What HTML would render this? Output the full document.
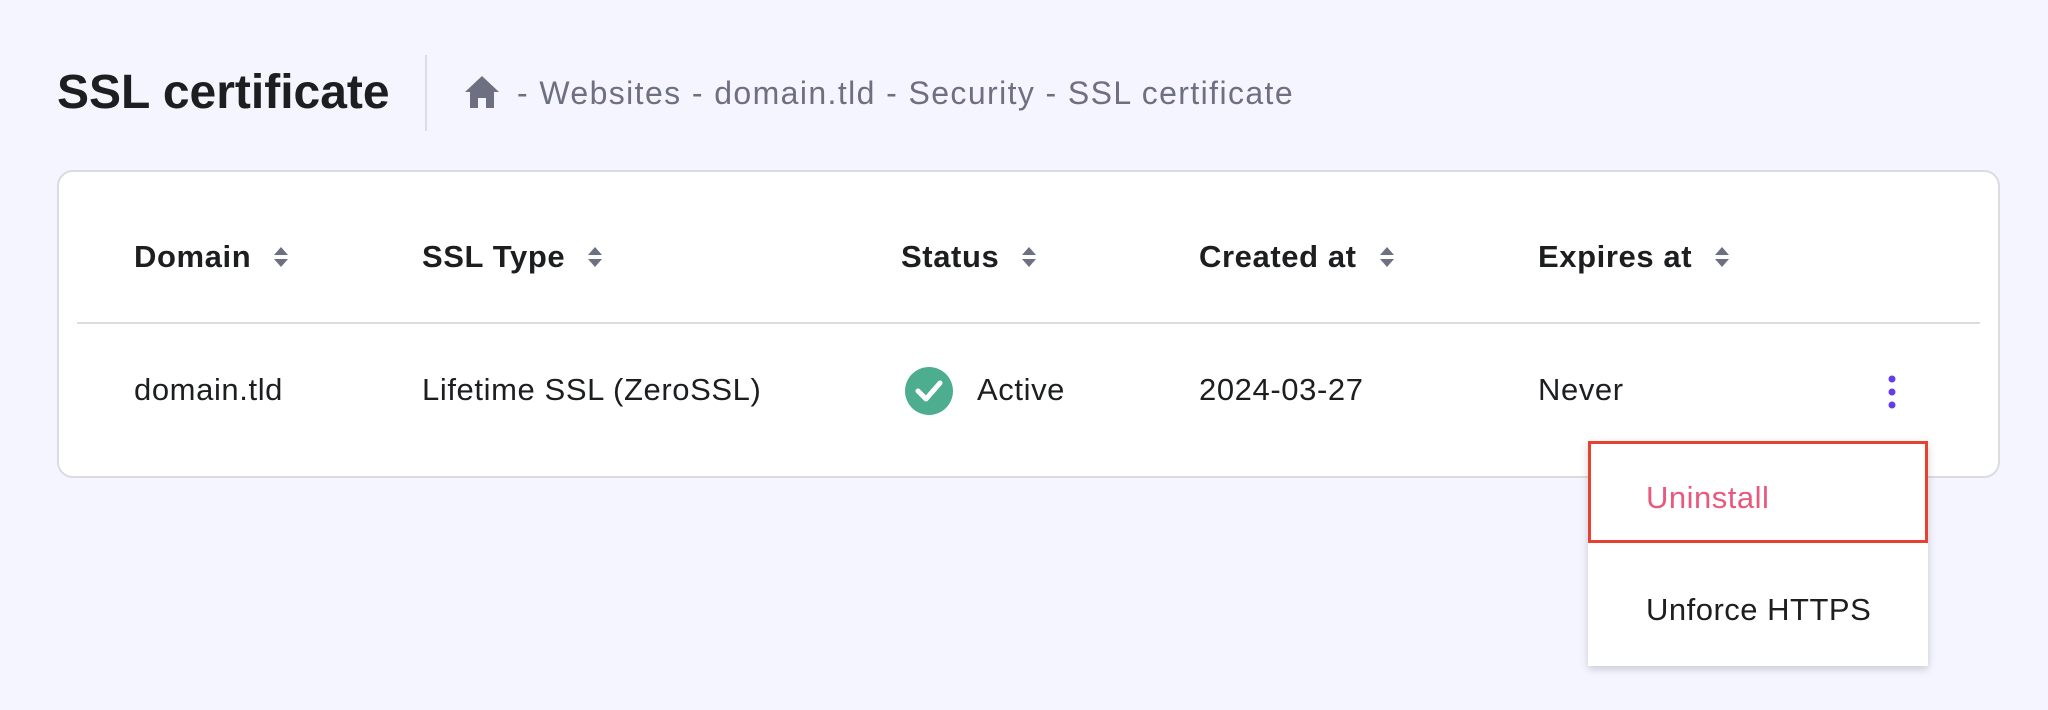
<!DOCTYPE html>
<html><head><meta charset="utf-8"><style>
*{margin:0;padding:0;box-sizing:border-box}
body{width:2048px;height:710px;background:#f4f5ff;font-family:"Liberation Sans",sans-serif;position:relative;overflow:hidden;color:#1d1e20}
.abs{position:absolute;white-space:nowrap}
.title{left:57px;top:65px;font-size:48px;font-weight:bold;line-height:56px;color:#1d1e20;letter-spacing:0}
.div{left:425px;top:55px;width:2px;height:76px;background:#dcdde6}
.bc{left:517px;top:74px;font-size:32px;line-height:38px;color:#6d7081;letter-spacing:1.4px}
.card{left:57px;top:170px;width:1943px;height:308px;background:#fff;border:2px solid #dadce0;border-radius:16px}
.hline{left:77px;top:322px;width:1903px;height:2px;background:#dadce0}
.h{font-size:31px;font-weight:bold;line-height:36px;top:239px;letter-spacing:0.6px}
.c{font-size:31px;line-height:36px;top:372px;letter-spacing:0.6px}
.sort{display:inline-block;vertical-align:middle;margin-left:22px;margin-top:-4px}
.menu{left:1588px;top:441px;width:340px;height:225px;background:#fff;box-shadow:0 3px 8px rgba(0,0,0,.18)}
.un{left:1588px;top:441px;width:340px;height:102px;border:3px solid #e8412f}
</style></head><body>
<div class="abs title">SSL certificate</div>
<div class="abs div"></div>
<svg class="abs" style="left:464px;top:75px" width="36" height="34" viewBox="0 0 36 34"><path d="M18 1 L35 17 L30 17 L30 33 L22 33 L22 23 L14 23 L14 33 L6 33 L6 17 L1 17 Z" fill="#6d7081"/></svg>
<div class="abs bc">- Websites - domain.tld - Security - SSL certificate</div>
<div class="abs card"></div>
<div class="abs hline"></div>
<div class="abs h" style="left:134px">Domain<svg class="sort" width="16" height="22" viewBox="0 0 16 22"><path d="M8 1 L15 9 L1 9Z M8 21 L15 13 L1 13Z" fill="#6d7081"/></svg></div>
<div class="abs h" style="left:422px">SSL Type<svg class="sort" width="16" height="22" viewBox="0 0 16 22"><path d="M8 1 L15 9 L1 9Z M8 21 L15 13 L1 13Z" fill="#6d7081"/></svg></div>
<div class="abs h" style="left:901px">Status<svg class="sort" width="16" height="22" viewBox="0 0 16 22"><path d="M8 1 L15 9 L1 9Z M8 21 L15 13 L1 13Z" fill="#6d7081"/></svg></div>
<div class="abs h" style="left:1199px">Created at<svg class="sort" width="16" height="22" viewBox="0 0 16 22"><path d="M8 1 L15 9 L1 9Z M8 21 L15 13 L1 13Z" fill="#6d7081"/></svg></div>
<div class="abs h" style="left:1538px">Expires at<svg class="sort" width="16" height="22" viewBox="0 0 16 22"><path d="M8 1 L15 9 L1 9Z M8 21 L15 13 L1 13Z" fill="#6d7081"/></svg></div>
<div class="abs c" style="left:134px">domain.tld</div>
<div class="abs c" style="left:422px">Lifetime SSL (ZeroSSL)</div>
<svg class="abs" style="left:905px;top:367px" width="48" height="48" viewBox="0 0 48 48"><circle cx="24" cy="24" r="24" fill="#4dae8f"/><path d="M13 24 L21 32 L35 16" stroke="#fff" stroke-width="5" fill="none" stroke-linecap="round" stroke-linejoin="round"/></svg>
<div class="abs c" style="left:977px">Active</div>
<div class="abs c" style="left:1199px">2024-03-27</div>
<div class="abs c" style="left:1538px">Never</div>
<svg class="abs" style="left:1886px;top:374px" width="12" height="36" viewBox="0 0 12 36"><circle cx="6" cy="5" r="3.5" fill="#673de6"/><circle cx="6" cy="18" r="3.5" fill="#673de6"/><circle cx="6" cy="31" r="3.5" fill="#673de6"/></svg>
<div class="abs menu"></div>
<div class="abs un"></div>
<div class="abs" style="left:1646px;top:480px;font-size:31px;line-height:36px;color:#e8597d;letter-spacing:0.5px">Uninstall</div>
<div class="abs" style="left:1646px;top:592px;font-size:31px;line-height:36px;color:#1d1e20;letter-spacing:0.5px">Unforce HTTPS</div>
</body></html>
